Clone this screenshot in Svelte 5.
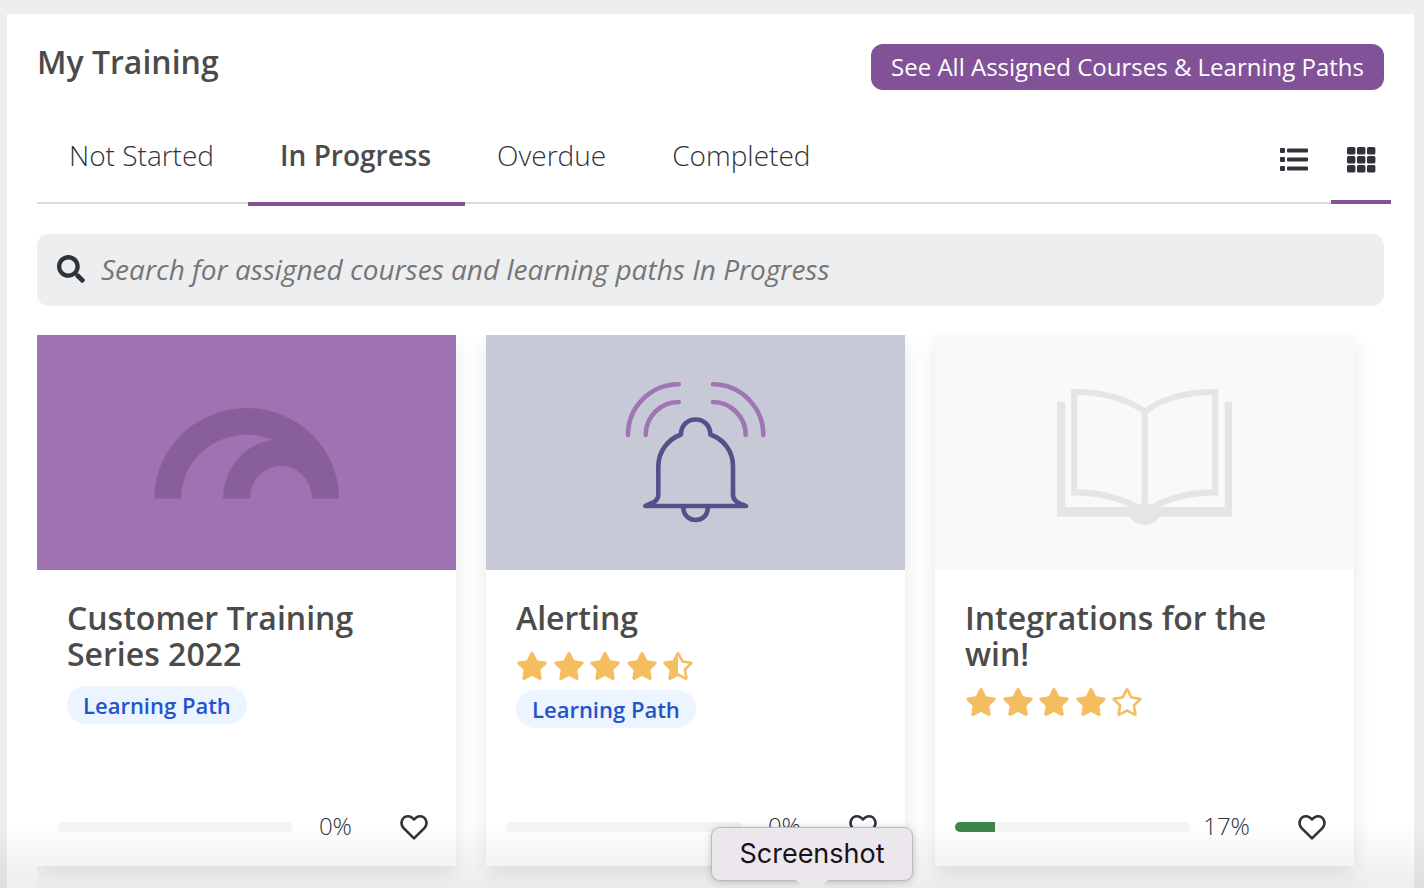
<script lang="ts">
  type Course = {
    id: number;
    title: string;
    art: "arch" | "bell" | "book";
    rating: number | null;
    learningPath: boolean;
    progress: number;
  };

  const tabs = ["Not Started", "In Progress", "Overdue", "Completed"];

  const courses: Course[] = [
    { id: 1, title: "Customer Training Series 2022", art: "arch", rating: null, learningPath: true, progress: 0 },
    { id: 2, title: "Alerting", art: "bell", rating: 4.5, learningPath: true, progress: 0 },
    { id: 3, title: "Integrations for the win!", art: "book", rating: 4, learningPath: false, progress: 17 },
  ];

  let activeTab = $state("In Progress");
  let view = $state("grid");
  let query = $state("");
</script>

<div class="page">
  <main class="panel">
    <header class="panel-header">
      <h1>My Training</h1>
      <button type="button" class="see-all">See All Assigned Courses &amp; Learning Paths</button>
    </header>

    <nav class="tab-bar" aria-label="Training status">
      <div class="tabs">
        {#each tabs as tab (tab)}
          <button type="button" class="tab" class:active={tab === activeTab} onclick={() => (activeTab = tab)}>
            {tab}
          </button>
        {/each}
      </div>
      <div class="views">
        <button type="button" class="view" class:active={view === "list"} aria-label="List view" onclick={() => (view = "list")}>
          <svg width="30" height="26" viewBox="0 0 30 26" fill="currentColor">
            {#each [1, 10, 19] as y (y)}
              <rect x="1" {y} width="5" height="5" rx="1" />
              <rect x="8" y={y + 0.5} width="21" height="4" rx="1" />
            {/each}
          </svg>
        </button>
        <button type="button" class="view" class:active={view === "grid"} aria-label="Grid view" onclick={() => (view = "grid")}>
          <svg width="30" height="26" viewBox="0 0 30 26" fill="currentColor">
            {#each [0, 9, 18] as y (y)}
              {#each [1, 11, 21] as x (x)}
                <rect {x} {y} width="8.4" height="7.6" rx="1.6" />
              {/each}
            {/each}
          </svg>
        </button>
      </div>
    </nav>

    <label class="search">
      <svg width="28" height="28" viewBox="0 0 512 512" fill="currentColor" aria-hidden="true">
        <path d="M505 442.7L405.3 343c-4.5-4.5-10.6-7-17-7H372c27.6-35.3 44-79.7 44-128C416 93.1 322.9 0 208 0S0 93.1 0 208s93.1 208 208 208c48.3 0 92.7-16.4 128-44v16.3c0 6.4 2.5 12.5 7 17l99.7 99.7c9.4 9.4 24.6 9.4 33.9 0l28.3-28.3c9.4-9.4 9.4-24.6.1-34zM208 336c-70.7 0-128-57.2-128-128 0-70.7 57.2-128 128-128 70.7 0 128 57.2 128 128 0 70.7-57.2 128-128 128z" />
      </svg>
      <input
        type="text"
        aria-label="Search training"
        placeholder="Search for assigned courses and learning paths {activeTab}"
        bind:value={query}
      />
    </label>

    <div class="cards">
      {#each courses as course (course.id)}
        <article class="card">
          <svg class="art art-{course.art}" viewBox="0 0 419 235" fill="none" aria-hidden="true">
            {#if course.art === "arch"}
              <path
                fill="#895f9b"
                d="M117.3 163.5A92.35 90.5 0 0 1 302 163.5H275A31 32.5 0 0 0 213 163.5H186A58 60 0 0 1 235.7 104.7A66 64 0 0 0 144 163.5Z"
              />
            {:else if course.art === "bell"}
              <g stroke="#9f75b2" stroke-width="4.6" stroke-linecap="round">
                <path d="M142 100A50.7 50.7 0 0 1 192.7 49.3M159.7 100A33 33 0 0 1 192.7 67" />
                <path d="M277.3 100A50.7 50.7 0 0 0 227 49.3M259.7 100A33 33 0 0 0 227 67" />
              </g>
              <g stroke="#54508a" stroke-width="4.6" stroke-linecap="round" stroke-linejoin="round">
                <path d="M195 99.5C195 79.5 224.3 79.5 224.3 99.5C238 104.5 247 116 247 131.5V160C247 166.5 253 168 260 171H159.3C166 168 172.3 166.5 172.3 160V131.5C172.3 116 182 104.5 195 99.5Z" />
                <path d="M197.3 173C198 189 221.5 189 221.7 173" />
              </g>
            {:else}
              <g fill="#e5e5e5">
                <path d="M122 66.7H130.3V172H289.7V66.7H297V181.7H224C219 192.5 200 192.5 195 181.7H122Z" />
                <path d="M192 174L209.7 167L228 174V182H192Z" />
              </g>
              <g stroke="#e5e5e5" stroke-width="6.2">
                <path d="M209.7 76.5C191 63 167 57 139.2 57V157.3C166 157.3 190 164 209.7 177C229 164 254 157.3 280.3 157.3V57C253 57 228 63 209.7 76.5V180" />
              </g>
            {/if}
          </svg>

          <div class="card-body">
            <h2>{course.title}</h2>
            {#if course.rating !== null}
              <div class="stars" role="img" aria-label="{course.rating} out of 5 stars">
                {#each [1, 2, 3, 4, 5] as n (n)}
                  <svg width="32" height="28" viewBox="0 0 576 512" fill="currentColor">
                    {#if n <= course.rating}
                      <path d="M259.3 17.8L194 150.2 47.9 171.5c-26.2 3.8-36.7 36.1-17.7 54.6l105.7 103-25 145.5c-4.5 26.3 23.2 46 46.4 33.7L288 439.6l130.7 68.7c23.2 12.2 50.9-7.4 46.4-33.7l-25-145.5 105.7-103c19-18.5 8.5-50.8-17.7-54.6L382 150.2 316.7 17.8c-11.7-23.6-45.6-23.9-57.4 0z" />
                    {:else}
                      <path d="M528.1 171.5L382 150.2 316.7 17.8c-11.7-23.6-45.6-23.9-57.4 0L194 150.2 47.9 171.5c-26.2 3.8-36.7 36.1-17.7 54.6l105.7 103-25 145.5c-4.5 26.3 23.2 46 46.4 33.7L288 439.6l130.7 68.7c23.2 12.2 50.9-7.4 46.4-33.7l-25-145.5 105.7-103c19-18.5 8.5-50.8-17.7-54.6zM388.6 312.3l23.7 138.4L288 385.4l-124.3 65.3 23.7-138.4-100.6-98 139-20.2 62.2-126 62.2 126 139 20.2-100.6 98z" />
                      {#if n - 0.5 <= course.rating}
                        <path d="M288 60L220 190 80 212 185 312 160 455 288 390z" />
                      {/if}
                    {/if}
                  </svg>
                {/each}
              </div>
            {/if}
            {#if course.learningPath}
              <span class="badge">Learning Path</span>
            {/if}
          </div>

          <footer class="card-footer">
            <div class="progress" role="progressbar" aria-label="Progress" aria-valuenow={course.progress} aria-valuemin="0" aria-valuemax="100">
              <div class="progress-fill" style="width: {course.progress}%"></div>
            </div>
            <span class="percent">{course.progress}%</span>
            <button type="button" class="favorite" aria-label="Add to favorites">
              <svg width="28" height="26" viewBox="0 0 28 26" fill="none" stroke="currentColor" stroke-width="2.6" stroke-linejoin="round">
                <path d="M14 24.4L3.4 13.9C-.6 9.1 2.4 2.2 8 2.2C10.6 2.2 12.4 3.4 14 5.5C15.6 3.4 17.4 2.2 20 2.2C25.6 2.2 28.6 9.1 24.6 13.9Z" />
              </svg>
            </button>
          </footer>
        </article>
      {/each}
    </div>
  </main>

  <div class="fade"></div>
  <div class="dock-tip" role="tooltip">Screenshot</div>
</div>

<style>
  :global(body) {
    background: #edeef0;
  }

  .page {
    position: relative;
    box-sizing: border-box;
    height: 100vh;
    padding: 14px 10px 0 7px;
    overflow: hidden;
    font-family: "Open Sans", sans-serif;
    color: #30343a;
  }

  .panel {
    box-sizing: border-box;
    min-height: 100%;
    padding: 30px 30px 0;
    background: #fff;
  }

  button {
    padding: 0;
    border: 0;
    background: none;
    font: inherit;
    color: inherit;
    cursor: pointer;
  }

  svg {
    display: block;
  }

  .panel-header {
    display: flex;
    align-items: flex-start;
    justify-content: space-between;
  }

  h1,
  h2 {
    margin: 0;
    font-size: 32px;
    font-weight: 600;
    line-height: 36px;
    color: #4b4b4b;
  }

  .see-all {
    height: 46px;
    padding: 0 20px;
    border-radius: 12px;
    background: #825299;
    color: #fff;
    font-size: 24px;
    line-height: 46px;
  }

  .tab-bar {
    display: flex;
    justify-content: space-between;
    height: 112px;
    margin-right: -7px;
    border-bottom: 2px solid #dcdddd;
  }

  .tabs {
    display: flex;
  }

  .tab {
    box-sizing: border-box;
    height: 116px;
    padding: 18px 34px 0 32px;
    border-bottom: 4px solid transparent;
    font-size: 28px;
    font-weight: 300;
  }

  .tab.active {
    border-color: #825299;
    font-weight: 600;
    color: #4b4b4b;
  }

  .views {
    display: flex;
    gap: 7px;
  }

  .view {
    display: flex;
    box-sizing: border-box;
    justify-content: center;
    width: 60px;
    height: 114px;
    padding-top: 57px;
    border-bottom: 4px solid transparent;
  }

  .view.active {
    border-color: #825299;
  }

  .search {
    display: flex;
    box-sizing: border-box;
    align-items: center;
    gap: 16px;
    height: 72px;
    margin-top: 30px;
    padding: 0 20px 2px;
    border-radius: 12px;
    background: #edeef0;
  }

  .search input {
    flex: 1;
    min-width: 0;
    padding: 0;
    border: 0;
    outline: 0;
    background: none;
    font: italic 28px "Open Sans", sans-serif;
    color: #30343a;
  }

  .search input::placeholder {
    color: #757575;
    opacity: 1;
  }

  .cards {
    display: grid;
    grid-template-columns: repeat(3, 1fr);
    gap: 30px;
    margin-top: 29px;
    padding: 0 30px 30px 0;
    overflow: hidden;
  }

  .card {
    display: flex;
    flex-direction: column;
    background: #fff;
    box-shadow: 0 8px 20px rgba(0, 0, 0, 0.1);
  }

  .art {
    width: 100%;
  }

  .art-arch {
    background: #9f72b1;
  }

  .art-bell {
    background: #c8c9d6;
  }

  .art-book {
    background: #f9f9f9;
  }

  .card-body {
    display: flex;
    flex-direction: column;
    align-items: flex-start;
    min-height: 188px;
    padding: 30px 30px 0;
  }

  .stars {
    display: flex;
    justify-content: space-between;
    width: 178px;
    margin-top: 16px;
    color: #f4bd5f;
  }

  .badge {
    margin-top: 14px;
    padding: 0 16px;
    border-radius: 19px;
    background: #ebf4ff;
    color: #1f55cc;
    font-size: 22px;
    font-weight: 600;
    line-height: 38px;
  }

  .stars + .badge {
    margin-top: 10px;
  }

  .card-footer {
    display: flex;
    align-items: center;
    height: 78px;
    padding: 0 28px 0 20px;
  }

  .progress {
    flex: 1;
    height: 10px;
    border-radius: 5px;
    background: #f4f4f4;
    overflow: hidden;
  }

  .progress-fill {
    height: 100%;
    background: #3b864d;
  }

  .percent {
    width: 59px;
    padding-bottom: 2px;
    font-size: 24px;
    font-weight: 300;
    line-height: 32px;
    text-align: right;
  }

  .favorite {
    margin-left: 48px;
  }

  /* darkens the bottom edge of the window behind the tooltip */
  .fade {
    position: absolute;
    right: 0;
    bottom: 0;
    left: 0;
    height: 64px;
    background: linear-gradient(rgba(0, 0, 0, 0), rgba(0, 0, 0, 0.07));
    pointer-events: none;
  }

  .dock-tip {
    position: absolute;
    bottom: 8px;
    left: 50%;
    width: 200px;
    border-radius: 8px;
    background: #ece7ed;
    box-shadow: 0 0 0 1px #bdb9be, 0 1px 8px rgba(0, 0, 0, 0.25);
    font-family: Inter, sans-serif;
    font-size: 27px;
    line-height: 52px;
    text-align: center;
    color: #17121a;
  }

  .dock-tip::after {
    content: "";
    position: absolute;
    top: 100%;
    left: 50%;
    margin-left: -16px;
    border: 16px solid transparent;
    border-top-color: #ece7ed;
  }
</style>
